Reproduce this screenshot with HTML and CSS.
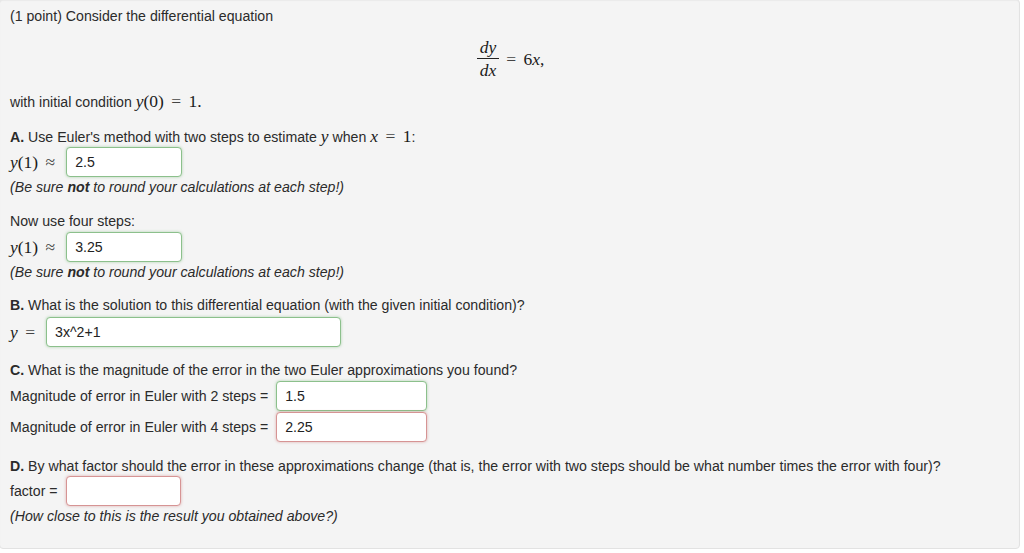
FILE: index.html
```html
<!DOCTYPE html>
<html>
<head>
<meta charset="utf-8">
<link rel="stylesheet" href="styles.css">
</head>
<body>
<div class="well">
  <div class="line">(1 point) Consider the differential equation</div>
  <div class="display">
    <span class="m frac">
      <span class="num"><i>dy</i></span>
      <span class="den"><i>dx</i></span>
    </span>
    <span class="m eqrhs"><span class="op">=</span> 6<i>x</i>,</span>
  </div>
  <div class="line">with initial condition <span class="m"><i>y</i>(0) <span class="op">=</span> 1.</span></div>

  <div class="line sp15"><b>A.</b> Use Euler's method with two steps to estimate <span class="m"><i>y</i></span> when <span class="m"><i>x</i> <span class="op">=</span> 1</span>:</div>
  <div class="row sp1"><span class="m lab"><i>y</i>(1) <span class="op">≈</span></span><span class="inp ok w116">2.5</span></div>
  <div class="line note">(Be sure <b>not</b> to round your calculations at each step!)</div>

  <div class="line sp14">Now use four steps:</div>
  <div class="row sp1"><span class="m lab"><i>y</i>(1) <span class="op">≈</span></span><span class="inp ok w116">3.25</span></div>
  <div class="line note">(Be sure <b>not</b> to round your calculations at each step!)</div>

  <div class="line sp13"><b>B.</b> What is the solution to this differential equation (with the given initial condition)?</div>
  <div class="row sp2"><span class="m lab"><i>y</i> <span class="op">=</span></span><span class="inp ok w295">3x^2+1</span></div>

  <div class="line sp13"><b>C.</b> What is the magnitude of the error in the two Euler approximations you found?</div>
  <div class="row sp1"><span class="lab">Magnitude of error in Euler with 2 steps =</span><span class="inp ok w151">1.5</span></div>
  <div class="row sp1"><span class="lab">Magnitude of error in Euler with 4 steps =</span><span class="inp bad w151">2.25</span></div>

  <div class="line sp14"><b>D.</b> By what factor should the error in these approximations change (that is, the error with two steps should be what number times the error with four)?</div>
  <div class="row"><span class="lab">factor =</span><span class="inp bad w115"></span></div>
  <div class="line note">(How close to this is the result you obtained above?)</div>
</div>
</body>
</html>
```

FILE: styles.css
```css
html, body {
  margin: 0;
  padding: 0;
  background: #ffffff;
}
body {
  font-family: "Liberation Sans", Arial, sans-serif;
  font-size: 14.15px;
  color: #2b2b2b;
}
.well {
  width: 1021px;
  height: 550px;
  box-sizing: border-box;
  margin: -1px 0 0 -1px;
  padding: 6px 10px 0 10px;
  background: #f4f4f4;
  border: 1px solid #e2e2e2;
  border-radius: 4px;
  box-shadow: inset 0 1px 1px rgba(0,0,0,0.04);
  display: flex;
  flex-direction: column;
}
.line {
  line-height: 20px;
  height: 20px;
  white-space: nowrap;
}
.note { font-style: italic; }
.sp1 { margin-top: 1px; }
.sp2 { margin-top: 2px; }
.sp13 { margin-top: 13px; }
.sp14 { margin-top: 14px; }
.sp15 { margin-top: 15px; }
.m {
  font-family: "Liberation Serif", "Times New Roman", serif;
  font-size: 17.5px;
  color: #1a1a1a;
}
.m i { font-style: italic; }
.op { padding: 0 3px; color: #444; }
.display {
  height: 65px;
  display: flex;
  align-items: center;
  justify-content: center;
  padding-left: 2px;
}
.frac {
  display: inline-flex;
  flex-direction: column;
  align-items: center;
  margin-right: 4px;
}
.num {
  line-height: 20px;
  padding: 0 3px 1px;
  border-bottom: 1px solid #222;
}
.den {
  line-height: 20px;
  padding: 1px 3px 0;
}
.eqrhs { padding-top: 2px; }
.row {
  display: flex;
  align-items: center;
  height: 30px;
}
.lab {
  margin-right: 8px;
  white-space: nowrap;
}
.inp {
  box-sizing: border-box;
  height: 30px;
  line-height: 28px;
  padding: 0 8px;
  background: #ffffff;
  border-radius: 4px;
  color: #222;
  font-size: 14.15px;
}
.ok {
  border: 1px solid #8cc08c;
  box-shadow: 0 0 3px rgba(92, 170, 92, 0.45);
}
.bad {
  border: 1px solid #d69494;
  box-shadow: 0 0 3px rgba(200, 90, 90, 0.45);
}
.w116 { width: 116px; }
.w295 { width: 295px; }
.w151 { width: 151px; }
.w115 { width: 115px; }
```
